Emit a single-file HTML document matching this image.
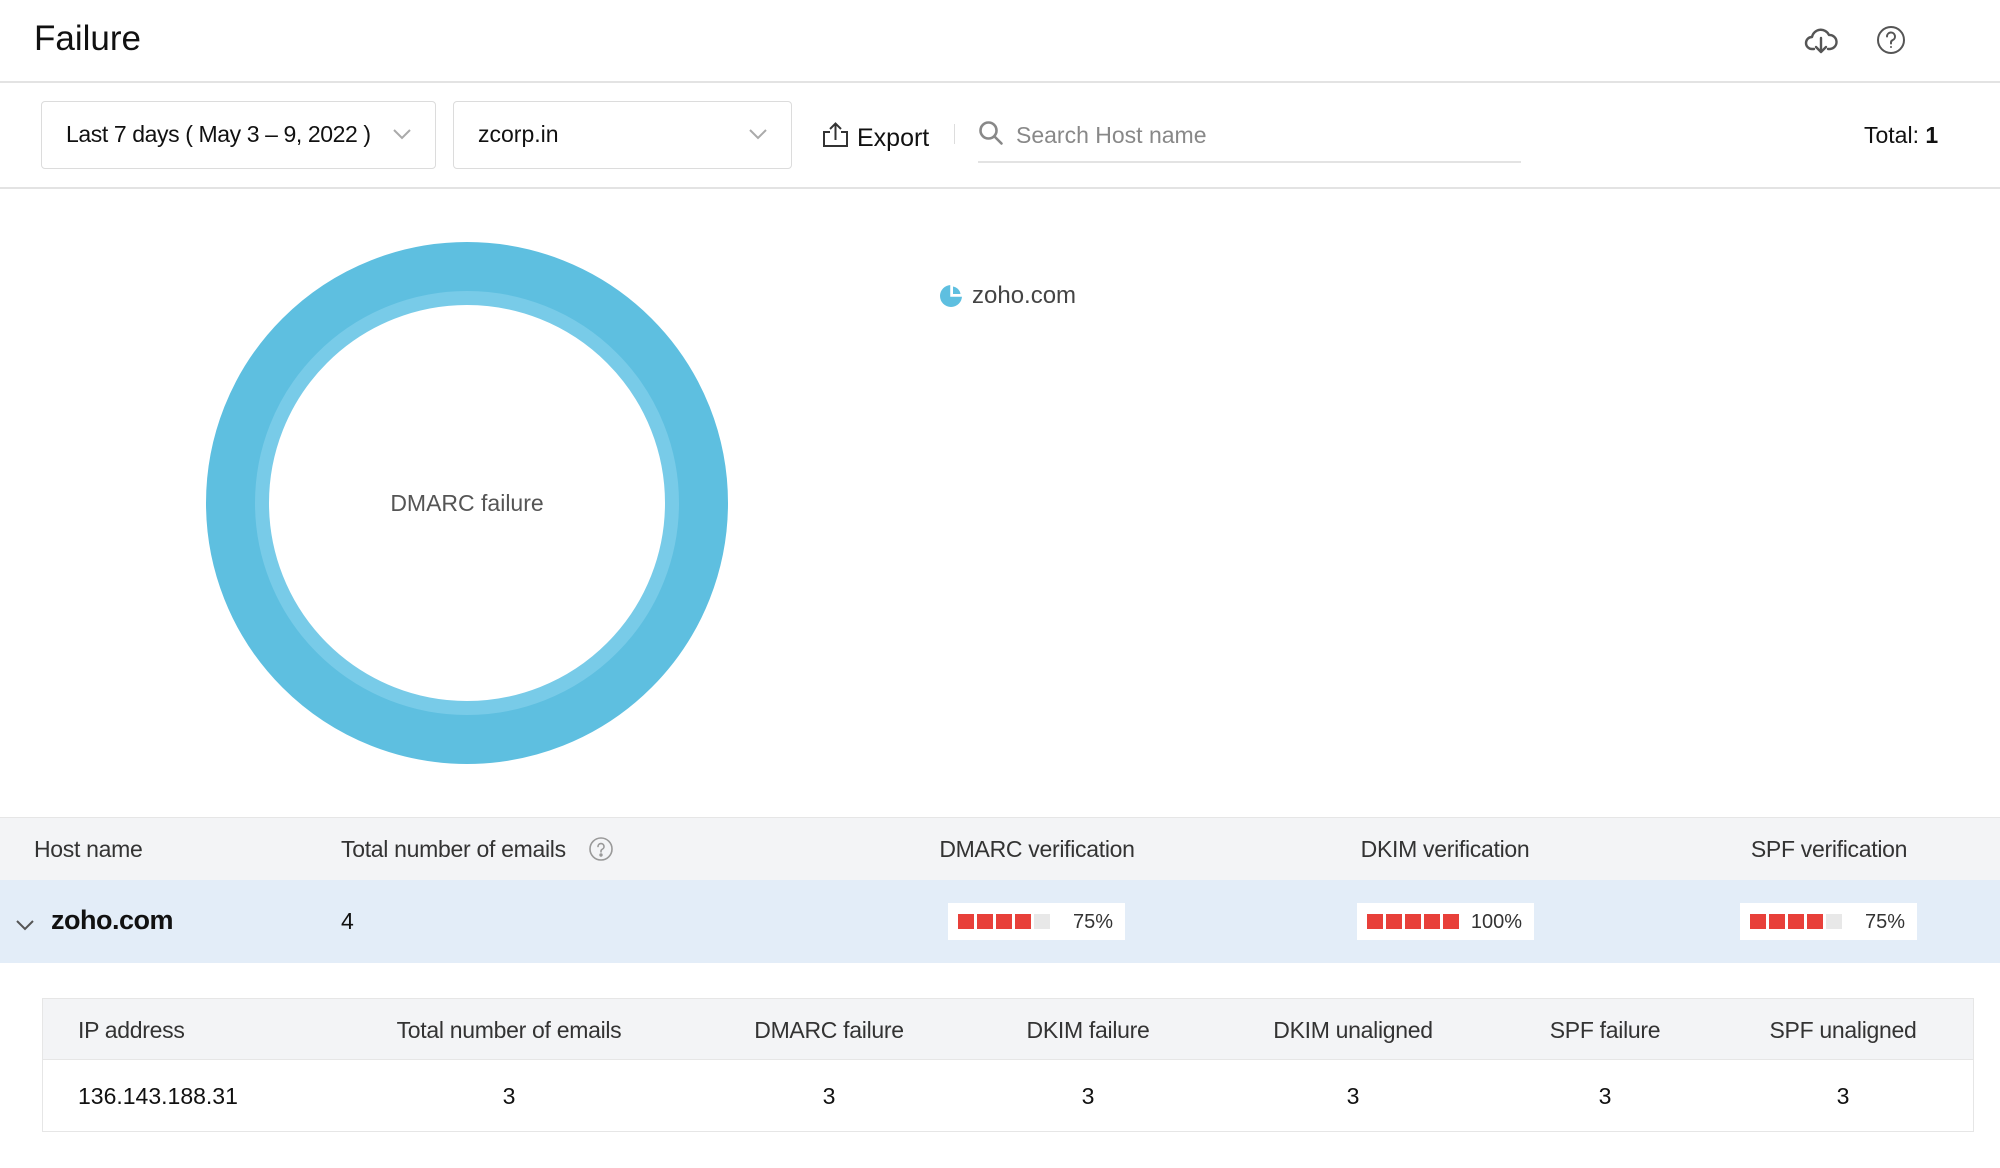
<!DOCTYPE html>
<html><head><meta charset="utf-8"><style>
*{margin:0;padding:0;box-sizing:border-box}
body{width:2000px;height:1168px;background:#fff;font-family:"Liberation Sans",sans-serif;color:#222;position:relative;overflow:hidden}
.a{position:absolute;white-space:nowrap}
.box{position:absolute;border:1.5px solid #dcdcdc;border-radius:4px;background:#fff}
.hd{font-size:23px;color:#333;letter-spacing:-0.3px}
.badge{position:absolute;background:#fff;width:177px;height:37px}
.sq{position:absolute;top:11px;width:16px;height:15px;background:#e8403a}
.sq.g{background:#e8e8e8}
.pct{position:absolute;right:12px;top:8px;font-size:20px;color:#333}
.c{transform:translateX(-50%)}
</style></head><body>
<div class="a" style="left:34px;top:19px;font-size:35px;color:#111">Failure</div>
<svg class="a" style="left:1803px;top:22px" width="36" height="36" viewBox="0 0 36 36" fill="none" stroke="#555" stroke-width="2.4" stroke-linecap="round" stroke-linejoin="round"><path d="M11 27H9a6 6 0 0 1 0-12 9 9 0 0 1 17-2 6.5 6.5 0 0 1 1 14h-2"/><path d="M18 16v14M13 25l5 5 5-5"/></svg>
<svg class="a" style="left:1875px;top:24px" width="32" height="32" viewBox="0 0 32 32" fill="none" stroke="#555" stroke-width="2"><circle cx="16" cy="16" r="13"/><path d="M12 12.5a4 4 0 1 1 5.5 3.7c-1 .5-1.5 1.2-1.5 2.3v1" stroke-linecap="round"/><circle cx="16" cy="23" r="1" fill="#555" stroke="none"/></svg>
<div class="a" style="left:0;top:81px;width:2000px;height:2px;background:#e3e3e3"></div>
<div class="box" style="left:41px;top:101px;width:395px;height:68px"></div>
<div class="a" style="left:66px;top:121px;font-size:23px;color:#111;letter-spacing:-0.4px">Last 7 days ( May 3 – 9, 2022 )</div>
<svg class="a" style="left:392px;top:128px" width="20" height="12"><path d="M2 2l8 8 8-8" fill="none" stroke="#aaa" stroke-width="2"/></svg>
<div class="box" style="left:453px;top:101px;width:339px;height:68px"></div>
<div class="a" style="left:478px;top:121px;font-size:23px;color:#111">zcorp.in</div>
<svg class="a" style="left:748px;top:128px" width="20" height="12"><path d="M2 2l8 8 8-8" fill="none" stroke="#aaa" stroke-width="2"/></svg>
<svg class="a" style="left:822px;top:122px" width="28" height="26" fill="none" stroke="#333" stroke-width="2"><path d="M8 10H2v14h23V10h-6"/><path d="M13.5 18V2M8 7l5.5-5.5L19 7"/></svg>
<div class="a" style="left:857px;top:124px;font-size:25px;color:#111">Export</div>
<div class="a" style="left:954px;top:124px;width:1px;height:20px;background:#ddd"></div>
<svg class="a" style="left:978px;top:120px" width="26" height="26" fill="none" stroke="#888" stroke-width="2.6"><circle cx="10.5" cy="10.5" r="8"/><path d="M16.5 16.5l7 7" stroke-linecap="round"/></svg>
<div class="a" style="left:1016px;top:122px;font-size:23px;color:#888">Search Host name</div>
<div class="a" style="left:978px;top:161px;width:543px;height:2px;background:#e3e3e3"></div>
<div class="a" style="left:1864px;top:122px;font-size:23px;color:#111">Total: <b>1</b></div>
<div class="a" style="left:0;top:187px;width:2000px;height:2px;background:#e3e3e3"></div>
<svg class="a" style="left:206px;top:242px" width="522" height="522"><circle cx="261" cy="261" r="231" fill="none" stroke="#5ebfe0" stroke-width="60"/><circle cx="261" cy="261" r="205" fill="none" stroke="#78cbe8" stroke-width="14"/></svg>
<div class="a c" style="left:467px;top:490px;font-size:23px;color:#555">DMARC failure</div>
<svg class="a" style="left:939px;top:284px" width="24" height="24"><circle cx="12" cy="12" r="11" fill="#5ebfe0"/><path d="M12 12V1a11 11 0 0 1 11 11z" fill="#fff" stroke="#fff" stroke-width="1.5"/><path d="M14 10V2.5a9 9 0 0 1 7.5 7.5z" fill="#5ebfe0"/></svg>
<div class="a" style="left:972px;top:282px;font-size:24px;color:#444">zoho.com</div>
<div class="a" style="left:0;top:817px;width:2000px;height:63px;background:#f3f4f6;border-top:1px solid #e6e6e6"></div>
<div class="a hd" style="left:34px;top:836px">Host name</div>
<div class="a hd" style="left:341px;top:836px">Total number of emails</div>
<svg class="a" style="left:588px;top:836px" width="26" height="26" fill="none" stroke="#999" stroke-width="1.6"><circle cx="13" cy="13" r="11"/><path d="M10 10.5a3 3 0 1 1 4.2 2.8c-.8.4-1.2 1-1.2 1.8v.8" stroke-linecap="round"/><circle cx="13" cy="19" r=".9" fill="#999"/></svg>
<div class="a hd c" style="left:1037px;top:836px">DMARC verification</div>
<div class="a hd c" style="left:1445px;top:836px">DKIM verification</div>
<div class="a hd c" style="left:1829px;top:836px">SPF verification</div>
<div class="a" style="left:0;top:880px;width:2000px;height:83px;background:#e3edf8"></div>
<svg class="a" style="left:15px;top:918px" width="20" height="14"><path d="M2 3l8 8 8-8" fill="none" stroke="#555" stroke-width="2"/></svg>
<div class="a" style="left:51px;top:905px;font-size:27px;font-weight:bold;color:#111;letter-spacing:-0.5px">zoho.com</div>
<div class="a" style="left:341px;top:908px;font-size:23px;color:#111">4</div>
<div class="badge" style="left:948px;top:903px"><div class="sq" style="left:10px"></div><div class="sq" style="left:29px"></div><div class="sq" style="left:48px"></div><div class="sq" style="left:67px"></div><div class="sq g" style="left:86px"></div><div class="pct">75%</div></div>
<div class="badge" style="left:1357px;top:903px"><div class="sq" style="left:10px"></div><div class="sq" style="left:29px"></div><div class="sq" style="left:48px"></div><div class="sq" style="left:67px"></div><div class="sq" style="left:86px"></div><div class="pct">100%</div></div>
<div class="badge" style="left:1740px;top:903px"><div class="sq" style="left:10px"></div><div class="sq" style="left:29px"></div><div class="sq" style="left:48px"></div><div class="sq" style="left:67px"></div><div class="sq g" style="left:86px"></div><div class="pct">75%</div></div>
<div class="a" style="left:42px;top:998px;width:1932px;height:134px;border:1.5px solid #e6e6e6"></div>
<div class="a" style="left:43px;top:999px;width:1930px;height:61px;background:#f3f4f6;border-bottom:1px solid #e6e6e6"></div>
<div class="a hd" style="left:78px;top:1017px">IP address</div>
<div class="a hd c" style="left:509px;top:1017px">Total number of emails</div>
<div class="a hd c" style="left:829px;top:1017px">DMARC failure</div>
<div class="a hd c" style="left:1088px;top:1017px">DKIM failure</div>
<div class="a hd c" style="left:1353px;top:1017px">DKIM unaligned</div>
<div class="a hd c" style="left:1605px;top:1017px">SPF failure</div>
<div class="a hd c" style="left:1843px;top:1017px">SPF unaligned</div>
<div class="a" style="left:78px;top:1083px;font-size:23px;color:#111">136.143.188.31</div>
<div class="a c" style="left:509px;top:1083px;font-size:23px;color:#111">3</div>
<div class="a c" style="left:829px;top:1083px;font-size:23px;color:#111">3</div>
<div class="a c" style="left:1088px;top:1083px;font-size:23px;color:#111">3</div>
<div class="a c" style="left:1353px;top:1083px;font-size:23px;color:#111">3</div>
<div class="a c" style="left:1605px;top:1083px;font-size:23px;color:#111">3</div>
<div class="a c" style="left:1843px;top:1083px;font-size:23px;color:#111">3</div>
</body></html>
